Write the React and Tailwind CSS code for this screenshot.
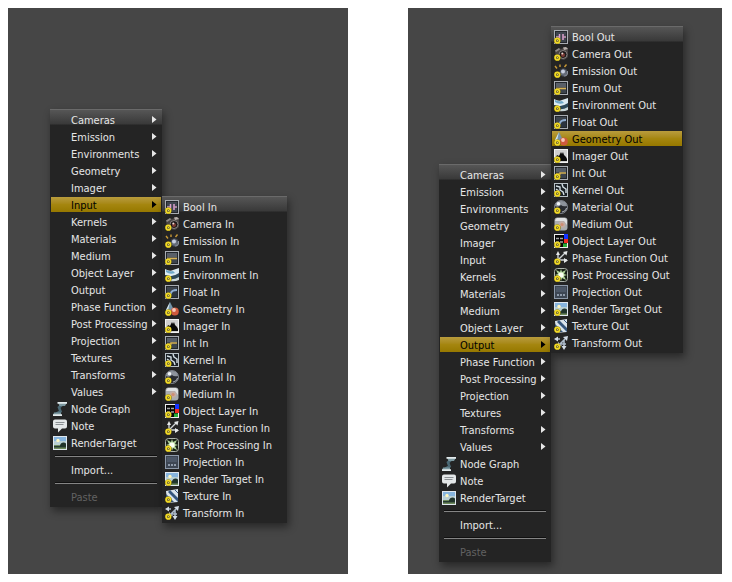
import React from "react";

const frame = (
  <>
    <rect x="0.5" y="0.5" width="13" height="13" fill="#3d444d" stroke="#a9adb3" />
    <rect x="1.5" y="1.5" width="11" height="11" fill="none" stroke="#23272c" />
  </>
);

const scenery = (
  <>
    <rect x="0.5" y="0.5" width="13" height="13" fill="#86b4de" stroke="#dfe7ee" />
    <rect x="1" y="5" width="12" height="4" fill="#b9cfd4" />
    <circle cx="5" cy="4.500" r="1.700" fill="#fdf6c0" />
    <path d="M1 9h12v4H1z" fill="#6f8a5c" />
    <path d="M1 10h12v1.500H1z" fill="#263c33" />
    <path d="M7 9.500c.5-3 4-4 6-2v3H7z" fill="#20332b" />
  </>
);

const drawings = {
  Bool: (
    <>
      {frame}
      <path d="M2 7h3M9.500 7H12" stroke="#c79abb" strokeWidth="1.500" fill="none" />
      <path d="M5.500 4v6M9 4v6" stroke="#dba0cd" strokeWidth="1.500" fill="none" />
    </>
  ),
  Camera: (
    <>
      <path d="M1 4l4-3 2 1 4-2 3 1v9l-4 3-8-2z" fill="#4a4544" />
      <path d="M1 3.500l4-2.500 1 1.500-4 2.500z" fill="#8f8b89" />
      <path d="M9 0.500l3-.5 2 2-4 1z" fill="#b8b1ad" />
      <circle cx="9" cy="7.500" r="4" fill="#1b1717" stroke="#8a8482" />
      <circle cx="9" cy="8" r="2" fill="#7b3a34" />
      <circle cx="8.300" cy="6.500" r="1" fill="#ead9d1" />
    </>
  ),
  Emission: (
    <>
      <path d="M1 2l2 2.500M6 0.500v2.500M12.500 0.500l-2 2.500" stroke="#c99a36" strokeWidth="1.400" />
      <circle cx="9.500" cy="8.500" r="3.800" fill="#646b78" stroke="#3b414c" />
      <circle cx="9" cy="7.500" r="2" fill="#c6cede" />
      <path d="M10 12q4 0 3.500-5" stroke="#8c929d" strokeWidth="1.200" fill="none" />
    </>
  ),
  Enum: (
    <>
      {frame}
      <path d="M2 2h10v4H2z" fill="#5a6069" />
      <path d="M2 7.500h10" stroke="#d9b356" strokeWidth="1.600" />
    </>
  ),
  Environment: (
    <>
      <path d="M0 1q5 3 8 1l6-2v6q-7 4-14 1z" fill="#dcebf2" />
      <path d="M1 2q4 2 7 1l2 2q-5 2-9-1z" fill="#6ea8c8" />
      <path d="M0 7q7 3 14-2v5q-5 4-13 2z" fill="#2c4858" />
      <path d="M4 11q5 1 10-2v3q-4 2-10 1z" fill="#c9d6d8" />
    </>
  ),
  Float: (
    <>
      {frame}
      <path d="M7 6h5v6H6z" fill="#2b3440" />
      <path d="M3 11q2 0 3-3t6-3" stroke="#90aed2" strokeWidth="2" fill="none" />
    </>
  ),
  Geometry: (
    <>
      <path d="M5 0l4 8q-4 2.500-8 0z" fill="#7393a8" />
      <path d="M5 0L3 8.500q-1 0-2-.5z" fill="#d8e9f0" />
      <circle cx="9.800" cy="9.500" r="4" fill="#cf5a3d" />
      <circle cx="9" cy="8" r="1.900" fill="#f7c8b8" />
    </>
  ),
  Imager: (
    <>
      <rect x="0.5" y="0.5" width="13" height="13" fill="#cfcfcf" stroke="#f1f1f1" />
      <path d="M1 11l2-5 2 1 2-4 1 2 1-2 1 3 2 2 1 2v2H1z" fill="#090909" />
    </>
  ),
  Int: (
    <>
      {frame}
      <path d="M2 2h10v4H2z" fill="#565d67" />
      <path d="M2 8h4V7h6" stroke="#d4ae50" strokeWidth="1.500" fill="none" />
    </>
  ),
  Kernel: (
    <>
      <rect x="0.5" y="0.5" width="13" height="13" fill="#1a2025" stroke="#b7c0c5" />
      <path d="M2 3l4 1v3l3 2 1 3M8 1l1 3 3 2v4M2 6l3 2" stroke="#d4dfe4" strokeWidth="1.400" fill="none" />
    </>
  ),
  Material: (
    <>
      <circle cx="7" cy="7" r="6.500" fill="#282b31" stroke="#7d828a" />
      <path d="M1 6q0-5 6-5t6 5q-4 1-6-1-3 3-6 1z" fill="#8d939c" />
      <circle cx="4.500" cy="3.800" r="1.800" fill="#f0f4f6" />
      <path d="M8 12q4-1 4.500-4" stroke="#a4a9b0" strokeWidth="1.200" fill="none" />
    </>
  ),
  Medium: (
    <>
      <rect x="0.5" y="0.5" width="13" height="13" rx="3" fill="#a9adb0" />
      <path d="M3 1h8l2 2v5l-3-4H1l1-2z" fill="#dfe1e2" />
      <circle cx="8" cy="7.500" r="3.300" fill="#c4aca2" />
      <circle cx="8" cy="7.500" r="1.600" fill="#d08e74" />
    </>
  ),
  "Object Layer": (
    <>
      <rect x="0.5" y="0.5" width="13" height="13" fill="#050505" stroke="#ededed" />
      <path d="M2 4.500h3M6 4.500h3M2 8h3M6 8h3" stroke="#a5a5a5" strokeWidth="1.500" />
      <path d="M10 0h4v5h-4z" fill="#1634ff" />
      <path d="M10 5h4v4h-4z" fill="#ee2c20" />
      <path d="M9 9.500h4V13H9z" fill="#29af38" />
    </>
  ),
  "Phase Function": (
    <>
      <path d="M4 9V2M4 9h9M4 9l7-7" stroke="#cfd4d6" strokeWidth="1.400" />
      <path d="M4 0L2 4h4zM14 9.500L10 7v5zM13.500 0L9 1l3.500 3.500z" fill="#e5e8e8" />
    </>
  ),
  "Post Processing": (
    <>
      <rect x="0.5" y="0.5" width="13" height="13" rx="3" fill="#182017" stroke="#aeb4ac" />
      <path d="M7 1l1 3 4-2-2 4 3 1-3 1 2 4-4-2-1 3-1-3-4 2 2-4-3-1 3-1-2-4 4 2z" fill="#b1d59c" />
      <circle cx="7" cy="7" r="2.600" fill="#fbfff3" />
    </>
  ),
  Projection: (
    <>
      <rect x="0.5" y="0.5" width="13" height="13" fill="#3d4653" stroke="#8e9aaa" />
      <path d="M2 2h10v5H2z" fill="#4c5767" />
      <path d="M3 10h2M6 10h2M9 10h2" stroke="#a9b7c8" strokeWidth="1.300" />
    </>
  ),
  "Render Target": scenery,
  Texture: (
    <>
      <path d="M1 2l12-2v13L2 14z" fill="#dae3eb" />
      <path d="M5 1l8 8v4L3 3zM1 5l8 8H6L1 8z" fill="#35567e" />
      <path d="M10 1l3 3" stroke="#35567e" />
    </>
  ),
  Transform: (
    <>
      <path d="M11 3L6 8M2 3h4M6 8h6M10 4v7" stroke="#aebccb" strokeWidth="1.600" fill="none" />
      <path d="M14 0l-1 5-4-4zM0 3l4-2.500v5zM10 14l-2.500-4h5zM4 6l4 4H4z" fill="#d3dce6" />
    </>
  ),
  "Node Graph": (
    <>
      <path d="M3 12L7.500 9.500 6 5.500 10 2" stroke="#4b6975" strokeWidth="2.600" fill="none" />
      <path d="M5 0.500h9L12 4H6.500zM0 13.500l1-3h7v3z" fill="#7b979f" />
      <path d="M4.500 0H14v1.700H4.500zM0 12.300h9V14H0z" fill="#e2eaec" />
    </>
  ),
  Note: (
    <>
      <path d="M2 .5h10q2 0 2 2v5q0 2-2 2H9L5 13.500v-4H2q-2 0-2-2v-5q0-2 2-2z" fill="#e4e7e8" />
      <path d="M2.500 3.500h9M2.500 5.500h8" stroke="#8b9093" />
    </>
  ),
  RenderTarget: scenery,
};

function Icon({ name, badge }) {
  return (
    <svg viewBox="0 0 14 14" className="size-3.5 shrink-0" aria-hidden="true">
      {drawings[name]}
      {badge && name !== "Projection" && (
        <>
          <circle cx="3.300" cy="10.700" r="3.300" fill="#504308" />
          <circle cx="3.300" cy="10.700" r="2.200" fill="#3a3210" stroke="#f0d927" strokeWidth="1.800" />
          <circle cx="3.300" cy="10.700" r="0.700" fill="#f8ed86" />
        </>
      )}
    </svg>
  );
}

const categories = [
  "Cameras", "Emission", "Environments", "Geometry", "Imager", "Input",
  "Kernels", "Materials", "Medium", "Object Layer", "Output",
  "Phase Function", "Post Processing", "Projection", "Textures",
  "Transforms", "Values",
];

const nodes = [
  "Bool", "Camera", "Emission", "Enum", "Environment", "Float", "Geometry",
  "Imager", "Int", "Kernel", "Material", "Medium", "Object Layer",
  "Phase Function", "Post Processing", "Projection", "Render Target",
  "Texture", "Transform",
];

function Item({ label, icon, badge, arrow, active, disabled }) {
  const tone = active
    ? "bg-linear-to-b from-[#b99c3c] via-[#a5860f] to-[#967800] text-black"
    : disabled
      ? "text-[#626262]"
      : "text-[#e6e6e6]";
  return (
    <li role="none" className="h-[17px] px-px py-px">
      <button
        type="button"
        role="menuitem"
        disabled={disabled}
        aria-haspopup={arrow ? "menu" : undefined}
        className={"flex h-[15px] w-full items-center gap-1 pr-1 pl-0.5 text-left whitespace-nowrap " + tone}
      >
        <span className="flex size-3.5 shrink-0">
          {icon && <Icon name={icon} badge={badge} />}
        </span>
        <span className="grow self-start">{label}</span>
        {arrow && (
          <svg viewBox="0 0 5 8" className="h-2 w-[5px] shrink-0" aria-hidden="true">
            <path d="M0 0v7L4.500 3.500z" fill="currentColor" />
          </svg>
        )}
      </button>
    </li>
  );
}

function Menu({ label, className, children }) {
  return (
    <ul
      role="menu"
      aria-label={label}
      className={
        "shrink-0 border-t border-[#6a6a6a] bg-[#242424] bg-[linear-gradient(#565656,#393939_14px,#242424_15px)] pt-px pb-0.5 shadow-[2px_4px_8px_rgba(0,0,0,0.45)] " +
        className
      }
    >
      {children}
    </ul>
  );
}

function Separator() {
  return (
    <li role="separator" className="h-2.5 px-[5px] pt-1">
      <div className="h-0.5 border-t border-b border-t-[#101010] border-b-[#858585]" />
    </li>
  );
}

function MainMenu({ active }) {
  return (
    <Menu label="Add node" className="w-28">
      {categories.map((name) => (
        <Item key={name} label={name} arrow active={name === active} />
      ))}
      <Item label="Node Graph" icon="Node Graph" />
      <Item label="Note" icon="Note" />
      <Item label="RenderTarget" icon="RenderTarget" />
      <Separator />
      <Item label="Import..." />
      <Separator />
      <Item label="Paste" disabled />
    </Menu>
  );
}

function SubMenu({ suffix, active, className }) {
  return (
    <Menu label={suffix} className={"relative " + className}>
      {nodes.map((name) => (
        <Item key={name} label={name + " " + suffix} icon={name} badge active={name === active} />
      ))}
    </Menu>
  );
}

export default function App() {
  return (
    <main className="grid grid-cols-[340fr_314fr] gap-[60px] bg-white py-2 pr-2.5 pl-2 font-['DejaVu_Sans_Condensed','Noto_Sans',sans-serif] text-[11px] leading-[17px]">
      <section className="flex items-start bg-[#464646] pt-[101px] pl-[42px]">
        <MainMenu active="Input" />
        <SubMenu suffix="In" className="mt-[87px] w-[125px]" />
      </section>
      <section className="flex items-start bg-[#464646] pt-[18px] pb-3 pl-[31px]">
        <div className="pt-[138px]">
          <MainMenu active="Output" />
        </div>
        <SubMenu suffix="Out" active="Geometry" className="w-[132px]" />
      </section>
    </main>
  );
}
